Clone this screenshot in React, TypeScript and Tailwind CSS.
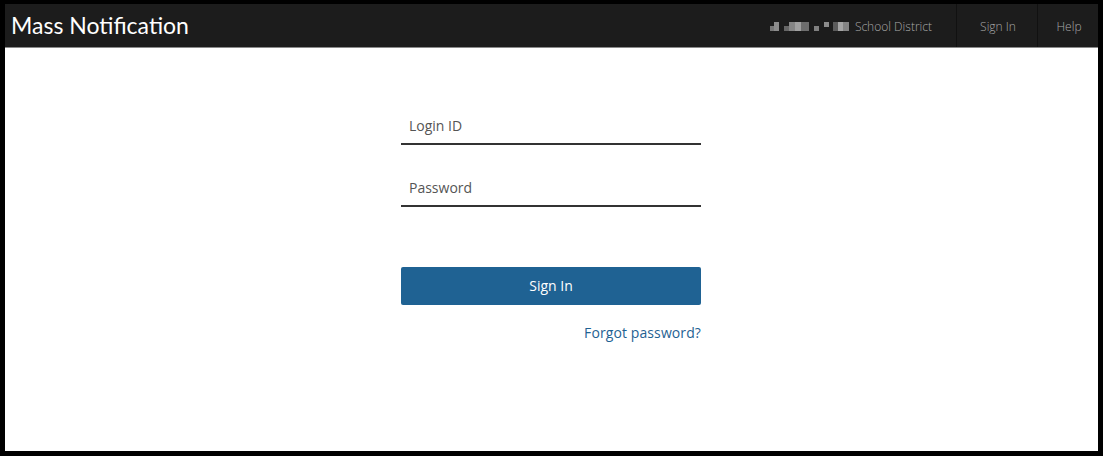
export default function App() {
    return (
        <div className="h-[456px] w-[1103px] overflow-hidden bg-black pt-1 pr-[5px] pb-[5px] pl-[5px] font-['Open_Sans',sans-serif]">
            <div className="flex h-full flex-col bg-white">
                <header className="flex h-[44px] items-stretch justify-between border-b border-[#8a8a8a] bg-[#1c1c1c]">
                    <div className="flex items-center pl-[6px]">
                        <span className="font-['Lato',sans-serif] text-[23px] leading-none text-white">Mass Notification</span>
                    </div>
                    <div className="flex items-stretch text-xs font-light text-[#a8a8a8]">
                        <div className="flex items-center pt-[2px] pr-6">
                            <div className="mr-[6px] flex items-end">
                                <span className="h-[5px] w-1 bg-[#777777]" />
                                <span className="h-[9px] w-[5px] bg-[#8c8c8c]" />
                                <span className="ml-[5px] h-[5px] w-[5px] bg-[#666666]" />
                                <span className="h-[9px] w-[6px] bg-[#858585]" />
                                <span className="h-[9px] w-[6px] bg-[#a0a0a0]" />
                                <span className="h-[9px] w-[8px] bg-[#6e6e6e]" />
                                <span className="ml-[5px] h-[5px] w-[5px] bg-[#808080]" />
                                <span className="ml-[5px] mb-1 h-[5px] w-[5px] bg-[#8c8c8c]" />
                                <span className="ml-[4px] h-[9px] w-[5px] bg-[#5c5c5c]" />
                                <span className="h-[9px] w-[5px] bg-[#a5a5a5]" />
                                <span className="h-[9px] w-[6px] bg-[#858585]" />
                            </div>
                            <span>School District</span>
                        </div>
                        <a className="flex w-[81px] items-center justify-center border-l border-[#111111] pt-[2px] pl-[2px]">Sign In</a>
                        <a className="flex w-[61px] items-center justify-center border-l border-[#111111] pt-[2px] pl-[2px]">Help</a>
                    </div>
                </header>
                <main className="flex flex-1 justify-center pr-px">
                    <form className="mt-[55px] flex w-[300px] flex-col">
                        <div className="h-[42px] border-b-2 border-[#333333] px-2 pt-[13px] text-sm leading-[20px] text-[#555555]">Login ID</div>
                        <div className="mt-5 h-[42px] border-b-2 border-[#333333] px-2 pt-[13px] text-sm leading-[20px] text-[#555555]">Password</div>
                        <button type="button" className="mt-[60px] h-[38px] rounded-[2px] bg-[#1f6293] text-sm text-white">Sign In</button>
                        <a className="mt-[18px] text-right text-sm leading-[20px] tracking-[0.1px] text-[#1f6293]">Forgot password?</a>
                    </form>
                </main>
            </div>
        </div>
    );
}
